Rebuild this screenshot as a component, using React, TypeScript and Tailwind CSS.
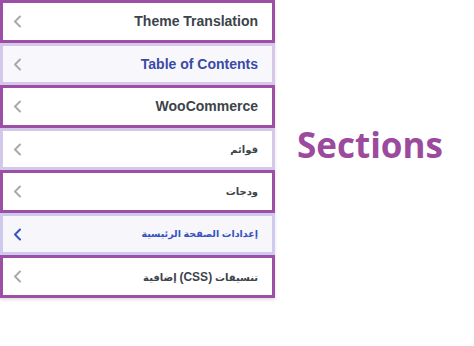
import React from "react";

const Chevron = ({ color }: { color: string }) => (
  <svg width="9" height="13" viewBox="0 0 9 13" fill="none">
    <path d="M7 1.5 L2 6.5 L7 11.5" stroke={color} strokeWidth="2" strokeLinecap="round" strokeLinejoin="round" />
  </svg>
);

type Row = {
  label: React.ReactNode;
  h: string;
  border: string;
  bg: string;
  text: string;
  chev: string;
  arabic?: boolean;
  size: string;
};

const rows: Row[] = [
  { label: "Theme Translation", h: "h-[43px]", border: "border-[#9d4fa6]", bg: "bg-white", text: "text-[#3c434a]", chev: "#a7aaad", size: "text-[14px]" },
  { label: "Table of Contents", h: "h-[42px]", border: "border-[#d4c8ea]", bg: "bg-[#f8f8fc]", text: "text-[#3a4aa5]", chev: "#a7aaad", size: "text-[14px]" },
  { label: "WooCommerce", h: "h-[43px]", border: "border-[#9d4fa6]", bg: "bg-white", text: "text-[#3c434a]", chev: "#a7aaad", size: "text-[14px]" },
  { label: "قوائم", h: "h-[42px]", border: "border-[#d4c8ea]", bg: "bg-white", text: "text-[#3c434a]", chev: "#a7aaad", arabic: true, size: "text-[10px]" },
  { label: "ودجات", h: "h-[43px]", border: "border-[#9d4fa6]", bg: "bg-white", text: "text-[#3c434a]", chev: "#a7aaad", arabic: true, size: "text-[10px]" },
  { label: "إعدادات الصفحة الرئيسية", h: "h-[42px]", border: "border-[#cfc9ee]", bg: "bg-[#f6f6fb]", text: "text-[#3452c0]", chev: "#3452c0", arabic: true, size: "text-[9.5px]" },
  {
    label: (
      <>
        تنسيقات <span className="text-[12px]">(CSS)</span> إضافية
      </>
    ),
    h: "h-[43px]", border: "border-[#9d4fa6]", bg: "bg-white", text: "text-[#3c434a]", chev: "#a7aaad", arabic: true, size: "text-[10px]",
  },
];

export default function App() {
  return (
    <div className="w-[474px] h-[346px] bg-white flex items-start">
      <div className="w-[275px] flex flex-col shadow-[0_2px_3px_rgba(0,0,0,0.12)]">
        {rows.map((r, i) => (
          <div
            key={i}
            className={`${r.h} ${r.border} ${r.bg} border-[3px] flex items-center justify-between pl-[10px] pr-[14px]`}
          >
            <Chevron color={r.chev} />
            <span
              dir={r.arabic ? "rtl" : "ltr"}
              className={`${r.text} ${r.size} font-bold`}
              style={{ fontFamily: '"Liberation Sans", "DejaVu Sans", sans-serif' }}
            >
              {r.label}
            </span>
          </div>
        ))}
      </div>
      <div className="h-[298px] flex-1 flex items-center pl-[22px] pb-[10px]">
        <span
          className="text-[35px] font-bold text-[#9b4a9e] leading-none"
          style={{ fontFamily: '"Open Sans", sans-serif' }}
        >
          Sections
        </span>
      </div>
    </div>
  );
}
